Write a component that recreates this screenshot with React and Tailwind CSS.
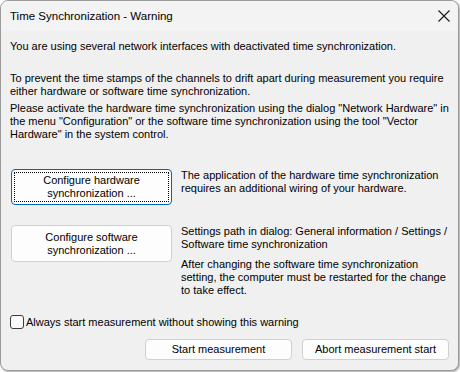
import { useState } from 'react';

function CloseIcon() {
  return (
    <svg width="12" height="12" viewBox="0 0 12 12" className="block">
      <path d="M0.5 0.5 L11.5 11.5 M11.5 0.5 L0.5 11.5" stroke="#1a1a1a" strokeWidth="1.1" fill="none" />
    </svg>
  );
}

function DialogButton({ children, focused, className = '' }) {
  return (
    <button
      className={
        'relative flex items-center justify-center rounded-[4px] bg-[#fdfdfd] text-center leading-[13px] text-black ' +
        (focused ? 'border border-[#0067c0] ' : 'border border-[#d0d0d0] ') +
        className
      }
    >
      {focused && (
        <span className="pointer-events-none absolute inset-[2px] border border-dotted border-black" />
      )}
      <span>{children}</span>
    </button>
  );
}

export default function App() {
  const [skipWarning, setSkipWarning] = useState(false);

  return (
    <div
      className="h-[372px] w-[460px] bg-white text-[11px] text-black"
      style={{ fontFamily: '"Liberation Sans", Arial, sans-serif' }}
    >
      <div className="flex h-[371px] w-[459px] flex-col overflow-hidden rounded-[8px] border border-[#9b9b9b] bg-[#f0f0f0] shadow-[1px_1px_2px_rgba(0,0,0,0.35)]">
        {/* title bar */}
        <div className="flex h-[30px] shrink-0 items-center justify-between bg-[#f3f3f3] pl-[9px] pr-[8px]">
          <span className="text-[11.5px] leading-[13px]">Time Synchronization - Warning</span>
          <CloseIcon />
        </div>

        <div className="flex flex-col pl-[9px] pr-[8px] leading-[13px]">
          <p className="mt-[9px] whitespace-nowrap">
            You are using several network interfaces with deactivated time synchronization.
          </p>
          <p className="mt-[19px] whitespace-nowrap">
            To prevent the time stamps of the channels to drift apart during measurement you require
            <br />
            either hardware or software time synchronization.
          </p>
          <p className="mt-[4px] whitespace-nowrap">
            Please activate the hardware time synchronization using the dialog "Network Hardware" in
            <br />
            the menu "Configuration" or the software time synchronization using the tool "Vector
            <br />
            Hardware" in the system control.
          </p>

          <div className="mt-[28px] flex items-start gap-[9px]">
            <DialogButton focused className="ml-[1px] h-[36px] w-[161px] shrink-0">
              Configure hardware
              <br />
              synchronization ...
            </DialogButton>
            <p className="whitespace-nowrap">
              The application of the hardware time synchronization
              <br />
              requires an additional wiring of your hardware.
            </p>
          </div>

          <div className="mt-[20px] flex items-start gap-[9px]">
            <DialogButton className="ml-[1px] h-[37px] w-[161px] shrink-0">
              Configure software
              <br />
              synchronization ...
            </DialogButton>
            <div className="flex flex-col">
              <p className="whitespace-nowrap">
                Settings path in dialog: General information / Settings /
                <br />
                Software time synchronization
              </p>
              <p className="mt-[7px] whitespace-nowrap">
                After changing the software time synchronization
                <br />
                setting, the computer must be restarted for the change
                <br />
                to take effect.
              </p>
            </div>
          </div>

          <label className="mt-[18px] flex items-center gap-[2px] whitespace-nowrap">
            <span
              onClick={() => setSkipWarning(!skipWarning)}
              className="flex h-[14px] w-[14px] items-center justify-center rounded-[3px] border border-[#3c3c3c] bg-[#fbfbfb]"
            >
              {skipWarning && <span className="text-[10px] leading-none">✓</span>}
            </span>
            Always start measurement without showing this warning
          </label>

          <div className="mt-[10px] flex justify-end gap-[10px] pr-[1px]">
            <DialogButton className="h-[21px] w-[147px]">Start measurement</DialogButton>
            <DialogButton className="h-[21px] w-[147px]">Abort measurement start</DialogButton>
          </div>
        </div>
      </div>
    </div>
  );
}
